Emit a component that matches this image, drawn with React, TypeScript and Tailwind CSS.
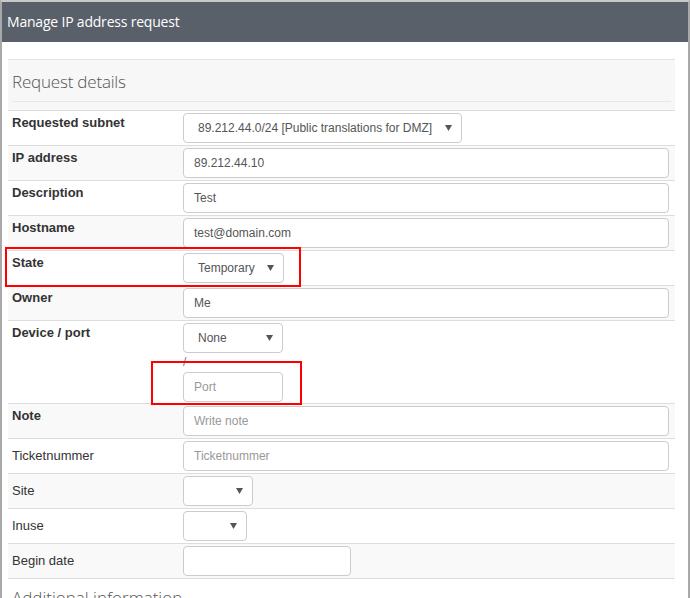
import React from "react";

type Row = {
  label: string;
  bold?: boolean;
  field: React.ReactNode;
  tall?: boolean;
};

function Select({ value, w }: { value: string; w: string }) {
  return (
    <div
      className={`${w} h-[30px] border border-[#cccccc] rounded-[4px] bg-white flex items-center justify-between pl-[14px] pr-[9px] text-[12px] text-[#555]`}
    >
      <span className="whitespace-nowrap">{value}</span>
      <svg width="7" height="6" viewBox="0 0 7 6" className="shrink-0">
        <path d="M0 0 H7 L3.5 6 Z" fill="#555" />
      </svg>
    </div>
  );
}

function Input({ value, placeholder, w = "w-full" }: { value?: string; placeholder?: string; w?: string }) {
  return (
    <div
      className={`${w} h-[30px] border border-[#cccccc] rounded-[4px] bg-white flex items-center px-[10px] text-[12px] whitespace-nowrap`}
    >
      {value ? <span className="text-[#555]">{value}</span> : <span className="text-[#999]">{placeholder}</span>}
    </div>
  );
}

export default function App() {
  const rows: Row[] = [
    { label: "Requested subnet", bold: true, field: <Select w="w-[279px]" value="89.212.44.0/24 [Public translations for DMZ]" /> },
    { label: "IP address", bold: true, field: <Input value="89.212.44.10" /> },
    { label: "Description", bold: true, field: <Input value="Test" /> },
    { label: "Hostname", bold: true, field: <Input value="test@domain.com" /> },
    { label: "State", bold: true, field: <Select w="w-[101px]" value="Temporary" /> },
    { label: "Owner", bold: true, field: <Input value="Me" /> },
    {
      label: "Device / port",
      bold: true,
      tall: true,
      field: (
        <div className="flex flex-col">
          <Select w="w-[100px]" value="None" />
          <span className="text-[12px] leading-[19px] text-[#777]">/</span>
          <Input w="w-[100px]" placeholder="Port" />
        </div>
      ),
    },
    { label: "Note", bold: true, field: <Input placeholder="Write note" /> },
    { label: "Ticketnummer", field: <Input placeholder="Ticketnummer" /> },
    { label: "Site", field: <Select w="w-[70px]" value="" /> },
    { label: "Inuse", field: <Select w="w-[64px]" value="" /> },
    { label: "Begin date", field: <Input w="w-[168px]" /> },
  ];

  return (
    <div className="w-[690px] h-[598px] overflow-hidden bg-white border-t-2 border-l-2 border-r-2 border-t-[#c9c9c9] border-l-[#a9a9a9] border-r-[#a9a9a9] font-['Liberation_Sans',Arial,sans-serif]">
      {/* title bar */}
      <div className="h-[40px] bg-[#59606a] pl-[5px] pt-[9px] text-white text-[14px] font-['Open_Sans',sans-serif] tracking-[-0.2px]">
        Manage IP address request
      </div>

      <div className="relative ml-[6px] mr-[13px] mt-[17px]">
        {/* panel heading */}
        <div className="border-t border-[#e3e3e3] bg-[#f7f7f7] px-[4px] pt-[11px]">
          <div className="pb-[8px] border-b border-[#e8e8e8] text-[17px] font-light text-[#555] font-['Open_Sans',sans-serif] leading-[22px] tracking-[-0.2px]">
            Request details
          </div>
          <div className="h-[8px]" />
        </div>

        {/* form table */}
        <div className="flex flex-col">
          {rows.map((r, i) => (
            <div
              key={r.label}
              className={`flex border-t border-[#dddddd] ${i % 2 === 1 ? "bg-[#f9f9f9]" : "bg-white"} ${r.tall ? "h-[83px]" : "h-[35px]"}`}
            >
              <div
                className={`w-[167px] shrink-0 pl-[4px] text-[13px] leading-[18px] text-[#333] ${r.bold ? "font-bold pt-[3px]" : "pt-[8px]"}`}
              >
                {r.label}
              </div>
              <div className="flex-1 pl-[8px] pr-[6px] pt-[2px]">{r.field}</div>
            </div>
          ))}
          <div className="border-t border-[#dddddd]" />
        </div>

        <div className="pl-[4px] pt-[8px] text-[17px] font-light text-[#555] font-['Open_Sans',sans-serif] leading-[22px]">
          Additional information
        </div>

        {/* highlight boxes */}
        <div className="absolute left-[-3px] top-[188px] w-[296px] h-[40px] border-[2px] border-[#ff0000] pointer-events-none" />
        <div className="absolute left-[143px] top-[302px] w-[151px] h-[44px] border-[2px] border-[#ff0000] pointer-events-none" />
      </div>
    </div>
  );
}
